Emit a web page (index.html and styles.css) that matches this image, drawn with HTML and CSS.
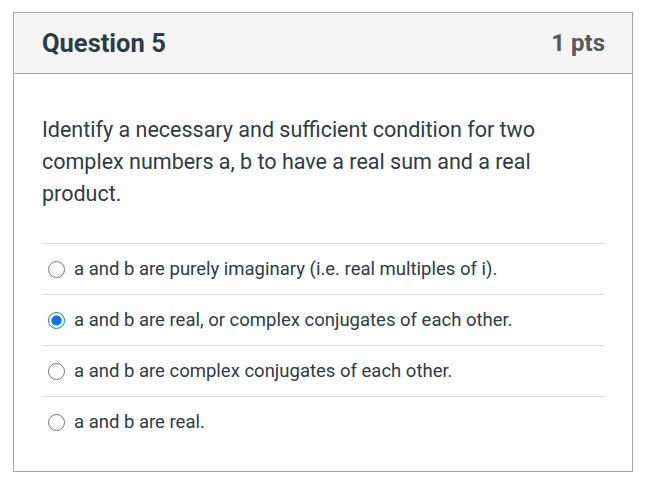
FILE: index.html
```html
<!DOCTYPE html>
<html lang="en">
  <head>
    <meta charset="UTF-8" />
    <title>Question 5</title>
    <link rel="stylesheet" href="styles.css">
  </head>
  <body>
    <div class="question">
      <div class="question-header">
        <h2 class="question-title">Question 5</h2>
        <div class="question-points">1 pts</div>
      </div>

      <div class="question-body">
        <p class="question-text">
          Identify a necessary and sufficient condition for two complex numbers
          a, b to have a real sum and a real product.
        </p>

        <div class="answers">
          <label class="answer">
            <input type="radio" name="q5" />
            <span>a and b are purely imaginary (i.e. real multiples of i).</span>
          </label>
          <label class="answer">
            <input type="radio" name="q5" checked />
            <span>a and b are real, or complex conjugates of each other.</span>
          </label>
          <label class="answer">
            <input type="radio" name="q5" />
            <span>a and b are complex conjugates of each other.</span>
          </label>
          <label class="answer">
            <input type="radio" name="q5" />
            <span>a and b are real.</span>
          </label>
        </div>
      </div>
    </div>
  </body>
</html>
```

FILE: styles.css
```css
body {
  font-family: Roboto, "Noto Sans", sans-serif;
  margin: 12px 0 0 13px;
  background: #fff;
  color: #2d3b45;
}

.question {
  width: 620px;
  box-sizing: border-box;
  border: 1px solid #a6a6a6;
}

.question-header {
  display: flex;
  align-items: center;
  justify-content: space-between;
  height: 60px;
  padding: 0 27px 0 28px;
  background: #f5f5f5;
  border-bottom: 1px solid #a6a6a6;
}

.question-title {
  margin: 0;
  font-size: 25.5px;
  font-weight: 700;
  color: #2d3b45;
}

.question-points {
  font-size: 24px;
  font-weight: 700;
  color: #565a5c;
}

.question-body {
  padding: 40px 27px 24px 28px;
}

.question-text {
  margin: 0 0 33px;
  font-size: 21.5px;
  line-height: 32px;
}

.answer {
  display: flex;
  align-items: center;
  gap: 9px;
  height: 50px;
  padding-left: 6px;
  border-top: 1px solid #dcdcdc;
  font-size: 18.5px;
  cursor: pointer;
}

.answer input {
  width: 17px;
  height: 17px;
  margin: 0;
}
```
